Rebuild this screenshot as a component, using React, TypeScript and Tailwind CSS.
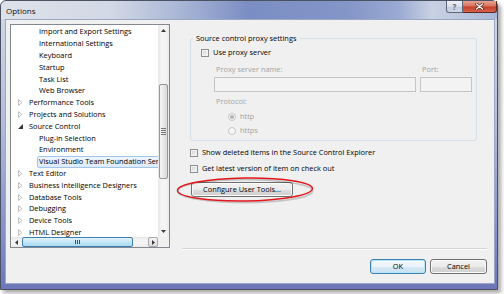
import type { ReactNode } from 'react'

type TreeNode = { label: string; depth: 0 | 1; open?: boolean; selected?: boolean }

const tree: TreeNode[] = [
  { label: 'Import and Export Settings', depth: 1 },
  { label: 'International Settings', depth: 1 },
  { label: 'Keyboard', depth: 1 },
  { label: 'Startup', depth: 1 },
  { label: 'Task List', depth: 1 },
  { label: 'Web Browser', depth: 1 },
  { label: 'Performance Tools', depth: 0 },
  { label: 'Projects and Solutions', depth: 0 },
  { label: 'Source Control', depth: 0, open: true },
  { label: 'Plug-in Selection', depth: 1 },
  { label: 'Environment', depth: 1 },
  { label: 'Visual Studio Team Foundation Server', depth: 1, selected: true },
  { label: 'Text Editor', depth: 0 },
  { label: 'Business Intelligence Designers', depth: 0 },
  { label: 'Database Tools', depth: 0 },
  { label: 'Debugging', depth: 0 },
  { label: 'Device Tools', depth: 0 },
  { label: 'HTML Designer', depth: 0 },
]

function Expander({ open }: { open?: boolean }) {
  return open ? (
    <svg width="5" height="5" viewBox="0 0 5 5"><path d="M5 0V5H0Z" fill="#333" /></svg>
  ) : (
    <svg width="5" height="7" viewBox="0 0 5 7"><path d="M0.6 0.6L3.8 3.5L0.6 6.4Z" fill="#fff" stroke="#a9a9a9" strokeWidth="0.8" /></svg>
  )
}

function Arrow({ dir }: { dir: 'up' | 'down' | 'left' | 'right' }) {
  const d = { up: 'M0 3L2.5 0L5 3Z', down: 'M0 0L5 0L2.5 3Z', left: 'M3 0L3 5L0 2.5Z', right: 'M0 0L3 2.5L0 5Z' }[dir]
  const v = dir === 'up' || dir === 'down'
  return (
    <svg width={v ? 5 : 3} height={v ? 3 : 5} viewBox={v ? '0 0 5 3' : '0 0 3 5'}><path d={d} fill="#3a3a3a" /></svg>
  )
}

function Check() {
  return <span className="block h-[8px] w-[8px] shrink-0 border border-[#8e8f8f] bg-[linear-gradient(135deg,#d3d3d3,#f6f6f6)] shadow-[inset_0_0_0_1px_#f4f4f4]" />
}

function Radio({ on }: { on?: boolean }) {
  return (
    <span className="flex h-[8px] w-[8px] shrink-0 items-center justify-center rounded-full border border-[#c6c6c6] bg-[#f6f6f6]">
      {on && <span className="h-[4px] w-[4px] rounded-full bg-[#b4b4b4]" />}
    </span>
  )
}

function Btn({ children, w, primary }: { children: ReactNode; w: string; primary?: boolean }) {
  return (
    <div
      className={`flex h-[15px] items-center justify-center rounded-[3px] border ${w} ${
        primary
          ? 'border-[#3c7fb1] bg-[linear-gradient(180deg,#f4f9fc_0%,#e9f3f9_50%,#d6e9f5_51%,#c9e1f1_100%)] shadow-[inset_0_0_0_1px_#b9e3f8]'
          : 'border-[#707070] bg-[linear-gradient(180deg,#f2f2f2_0%,#ebebeb_50%,#dddddd_51%,#cfcfcf_100%)] shadow-[inset_0_0_0_1px_#fafafa]'
      }`}
    >
      {children}
    </div>
  )
}

function TitleBar() {
  return (
    <div className="flex h-[18px] rounded-t-[6px] bg-[linear-gradient(90deg,#dde2ea_0%,#d2d8e5_22%,#a9b6d6_36%,#7b8ec3_50%,#8496c8_70%,#9aa9d2_80%,#c9d1e3_87%,#aab7da_100%)]">
      <span className="pl-[5px] pt-[4px] text-[8px] leading-[11px] text-[#111]">Options</span>
      <div className="ml-auto flex h-[12px]">
        <div className="flex w-[17px] items-center justify-center rounded-bl-[3px] border border-t-0 border-[#5d6778] bg-[linear-gradient(180deg,#eef1f6_0%,#d9dfea_50%,#c2cbdc_51%,#cfd7e6_100%)] text-[8px] font-bold leading-none text-[#5b6478]">
          ?
        </div>
        <div className="flex w-[34px] items-center justify-center rounded-br-[3px] border border-l-0 border-t-0 border-[#5a2a24] bg-[linear-gradient(180deg,#e8a493_0%,#d8735f_45%,#c4402c_55%,#d8644a_100%)]">
          <svg width="9" height="7" viewBox="0 0 9 7">
            <path d="M1.5 1L7.5 6M7.5 1L1.5 6" stroke="#4a1d17" strokeWidth="2.6" strokeLinecap="round" />
            <path d="M1.5 1L7.5 6M7.5 1L1.5 6" stroke="#fff" strokeWidth="1.4" strokeLinecap="round" />
          </svg>
        </div>
      </div>
    </div>
  )
}

function Tree() {
  return (
    <div className="flex h-[224px] w-[160px] shrink-0 flex-col border border-[#828790] bg-white">
      <div className="flex min-h-0 flex-1">
        <div className="min-w-0 flex-1 overflow-hidden pt-[1px]">
          {tree.map((n) => (
            <div key={n.label} className={`flex h-[11.8px] items-center whitespace-nowrap ${n.depth ? 'pl-[26px]' : 'pl-[7px]'}`}>
              {n.depth === 0 && (
                <span className="flex w-[9px] items-center">
                  <Expander open={n.open} />
                </span>
              )}
              <span
                className={
                  n.selected
                    ? 'rounded-[2px] border border-[#a2c4ec] bg-[linear-gradient(180deg,#eef5fd,#dcebfc)] px-[1px] leading-[9.8px]'
                    : 'px-[2px]'
                }
              >
                {n.label}
              </span>
            </div>
          ))}
        </div>
        <div className="flex w-[11px] flex-col bg-[linear-gradient(90deg,#e6e6e6,#f4f4f4_30%,#f4f4f4_70%,#e9e9e9)]">
          <div className="flex h-[11px] items-center justify-center"><Arrow dir="up" /></div>
          <div className="flex-1">
            <div className="mx-[1px] mt-[48px] flex h-[95px] items-center justify-center rounded-[2px] border border-[#979797] bg-[linear-gradient(90deg,#f3f3f3,#e8e8e8_50%,#d6d6d6)]">
              <span className="flex flex-col gap-[1px]">
                <span className="h-px w-[5px] bg-[#777]" />
                <span className="h-px w-[5px] bg-[#777]" />
                <span className="h-px w-[5px] bg-[#777]" />
                <span className="h-px w-[5px] bg-[#777]" />
              </span>
            </div>
          </div>
          <div className="flex h-[11px] items-center justify-center"><Arrow dir="down" /></div>
        </div>
      </div>
      <div className="flex h-[10px]">
        <div className="flex flex-1 bg-[linear-gradient(180deg,#e6e6e6,#f4f4f4_30%,#f4f4f4_70%,#e9e9e9)]">
          <div className="flex w-[10px] items-center justify-center"><Arrow dir="left" /></div>
          <div className="ml-[1px] flex w-[111px] items-center justify-center rounded-[2px] border border-[#3c7fb1] bg-[linear-gradient(180deg,#e3f4fc,#c4e5f6_50%,#a9d9f2)]">
            <span className="flex gap-[1px]">
              <span className="h-[4px] w-px bg-[#1f5a8a]" />
              <span className="h-[4px] w-px bg-[#1f5a8a]" />
              <span className="h-[4px] w-px bg-[#1f5a8a]" />
            </span>
          </div>
          <div className="flex-1" />
          <div className="flex w-[10px] items-center justify-center rounded-[2px] border border-[#a8a8a8] bg-[linear-gradient(180deg,#f4f4f4,#dedede)]"><Arrow dir="right" /></div>
        </div>
        <div className="w-[11px] bg-[#f0f0f0]" />
      </div>
    </div>
  )
}

function RightPane() {
  return (
    <div className="ml-[12px] flex flex-1 flex-col">
      <fieldset className="ml-[8px] mr-[10px] mt-[9px] rounded-[3px] border border-[#d5dfe5]">
        <legend className="ml-[2px] px-[3px] leading-[10px]">Source control proxy settings</legend>
        <div className="pb-[4px] pl-[10px] pt-[5px]">
          <div className="flex h-[10px] items-center gap-[4px]">
            <Check />
            <span>Use proxy server</span>
          </div>
          <div className="ml-[13px] mt-[6px] grid grid-cols-[202px_52px] gap-x-[4px] text-[#a3a3a3]">
            <span className="h-[10px] pl-[2px] leading-[10px]">Proxy server name:</span>
            <span className="h-[10px] pl-[2px] leading-[10px]">Port:</span>
            <span className="mt-[3px] h-[15px] border border-[#c4c4c4] bg-[#f3f3f3]" />
            <span className="mt-[3px] h-[15px] border border-[#c4c4c4] bg-[#f3f3f3]" />
          </div>
          <div className="ml-[15px] mt-[4px] h-[10px] leading-[10px] text-[#a3a3a3]">Protocol:</div>
          <div className="ml-[27px] mt-[6px] flex h-[10px] items-center gap-[4px] text-[#a3a3a3]">
            <Radio on />
            <span>http</span>
          </div>
          <div className="ml-[27px] mt-[4px] flex h-[10px] items-center gap-[4px] text-[#a3a3a3]">
            <Radio />
            <span>https</span>
          </div>
        </div>
      </fieldset>
      <div className="ml-[8px] mt-[7px] flex h-[10px] items-center gap-[4px]">
        <Check />
        <span>Show deleted items in the Source Control Explorer</span>
      </div>
      <div className="ml-[8px] mt-[6px] flex h-[10px] items-center gap-[4px]">
        <Check />
        <span>Get latest version of item on check out</span>
      </div>
      <div className="ml-[9px] mt-[8px]">
        <Btn w="w-[102px]">Configure User Tools...</Btn>
      </div>
      <div className="flex-1" />
      <div className="h-px bg-[#d5d5d5]" />
      <div className="h-px bg-white" />
      <div className="mt-[9px] flex justify-end gap-[4px]">
        <Btn w="w-[56px]" primary>OK</Btn>
        <Btn w="w-[57px]">Cancel</Btn>
      </div>
    </div>
  )
}

export default function App() {
  return (
    <div className="relative h-[294px] w-[504px] overflow-hidden bg-white font-['Open_Sans',sans-serif] text-[7.4px] text-black">
      <div className="flex h-[290px] w-[498px] flex-col rounded-t-[6px] border border-[#4b5261] bg-[linear-gradient(180deg,#d3dae7_0%,#b5bfdc_40%,#7f89c7_85%,#6c76b8_100%)] shadow-[3px_3px_4px_rgba(0,0,0,0.35)]">
        <TitleBar />
        <div className="flex flex-1">
          <div className="w-[4px]" />
          <div className="flex flex-1 border border-[#9aa6c2] bg-[#f0f0f0] pb-[9px] pl-[4px] pr-[7px] pt-[4px]">
            <Tree />
            <RightPane />
          </div>
          <div className="w-[2px]" />
        </div>
        <div className="h-[5px]" />
      </div>
      <svg className="absolute left-[175px] top-[175px]" width="142" height="30" viewBox="0 0 142 30">
        <ellipse cx="70" cy="16" rx="67.5" ry="11.5" fill="none" stroke="rgba(0,0,0,0.18)" strokeWidth="2" />
        <ellipse cx="70" cy="14.5" rx="67.5" ry="11.5" fill="none" stroke="#e3161c" strokeWidth="1.4" transform="rotate(-0.8 70 14.5)" />
      </svg>
    </div>
  )
}
